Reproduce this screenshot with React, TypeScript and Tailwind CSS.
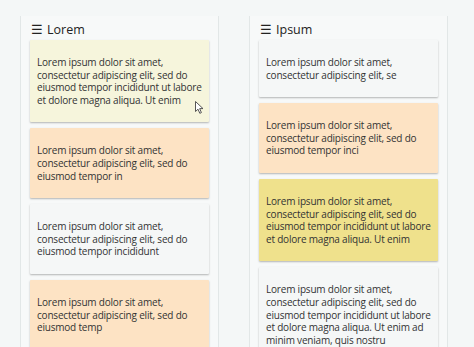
import React from 'react';

type Card = { text: string; color: string; cursor?: boolean };

const LONG =
  'Lorem ipsum dolor sit amet, consectetur adipiscing elit, sed do eiusmod tempor incididunt ut labore et dolore magna aliqua. Ut enim';

const columns: { title: string; cards: Card[] }[] = [
  {
    title: 'Lorem',
    cards: [
      { text: LONG, color: 'bg-[#f6f5dc]', cursor: true },
      { text: 'Lorem ipsum dolor sit amet, consectetur adipiscing elit, sed do eiusmod tempor in', color: 'bg-[#fde3c4]' },
      { text: 'Lorem ipsum dolor sit amet, consectetur adipiscing elit, sed do eiusmod tempor incididunt', color: 'bg-[#f5f7f7]' },
      { text: 'Lorem ipsum dolor sit amet, consectetur adipiscing elit, sed do eiusmod temp', color: 'bg-[#fde3c4]' },
    ],
  },
  {
    title: 'Ipsum',
    cards: [
      { text: 'Lorem ipsum dolor sit amet, consectetur adipiscing elit, se', color: 'bg-[#f5f7f7]' },
      { text: 'Lorem ipsum dolor sit amet, consectetur adipiscing elit, sed do eiusmod tempor inci', color: 'bg-[#fde3c4]' },
      { text: LONG, color: 'bg-[#efe18c]' },
      { text: LONG + ' ad minim veniam, quis nostru', color: 'bg-[#f5f7f7]' },
    ],
  },
];

function Cursor() {
  return (
    <svg className="absolute right-[5px] bottom-[8px]" width="9" height="13" viewBox="0 0 9 13">
      <path d="M0.5 0.5 L0.5 10.5 L3 8.2 L4.8 12.3 L6.4 11.6 L4.7 7.6 L8 7.6 Z" fill="#fff" stroke="#444" strokeWidth="0.9" strokeLinejoin="round" />
    </svg>
  );
}

export default function App() {
  return (
    <div className="h-[347px] w-[474px] overflow-hidden bg-[#f4f7f7] pl-5 pt-4 font-['Open_Sans',sans-serif] text-[#333]">
      <div className="flex gap-[30px]">
        {columns.map((col) => (
          <div key={col.title} className="w-[199px] h-[340px] shrink-0 border-x border-[#e2e7e7] bg-[#f7f9f9] px-[9px]">
            <div className="flex h-6 items-center gap-1 pl-[1px] pt-1 text-[12.5px] text-[#222]">
              <span>☰</span>
              <span>{col.title}</span>
            </div>
            <div className="flex flex-col gap-[6px]">
              {col.cards.map((c, i) => (
                <div
                  key={i}
                  className={`${c.color} relative rounded-[1px] px-[7px] py-4 text-[10px] leading-[12.6px] tracking-[-0.2px] shadow-[0_1px_2px_rgba(0,0,0,0.28)]`}
                >
                  {c.text}
                  {c.cursor && <Cursor />}
                </div>
              ))}
            </div>
          </div>
        ))}
      </div>
    </div>
  );
}
